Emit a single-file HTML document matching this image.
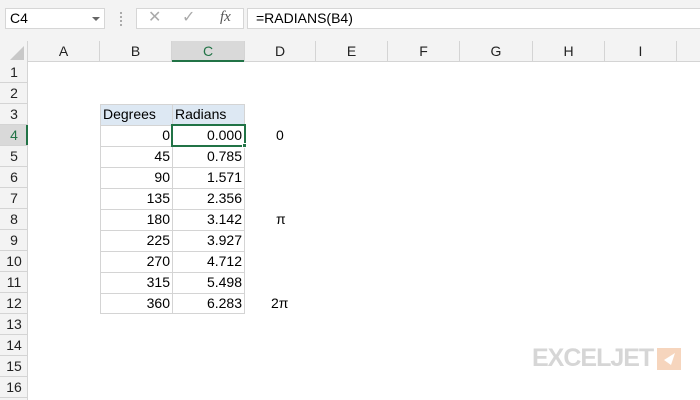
<!DOCTYPE html><html><head><style>
body{margin:0;width:700px;height:400px;overflow:hidden;background:#fff;font-family:"Liberation Sans",sans-serif;position:relative}
.a{position:absolute;box-sizing:border-box}
.t{font-size:14px;color:#000;line-height:21px;white-space:nowrap}
</style></head><body>
<div class="a" style="left:0;top:0;width:700px;height:41px;background:#f3f3f3"></div>
<div class="a" style="left:5px;top:8px;width:100px;height:21px;background:#fff;border:1px solid #d6d6d6"></div>
<div class="a t" style="left:10px;top:8px">C4</div>
<div class="a" style="left:92px;top:17px;width:0;height:0;border-left:4px solid transparent;border-right:4px solid transparent;border-top:4px solid #666"></div>
<div class="a" style="left:120px;top:12px;width:2px;height:14px;border-left:2px dotted #aaa"></div>
<div class="a" style="left:136px;top:8px;width:108px;height:21px;background:#fff;border:1px solid #d6d6d6"></div>
<div class="a t" style="left:148px;top:7px;color:#aaa;font-size:16px">✕</div>
<div class="a t" style="left:182px;top:7px;color:#aaa;font-size:16px">✓</div>
<div class="a t" style="left:220px;top:7px;color:#555;font-family:'Liberation Serif',serif;font-style:italic;font-size:15px">fx</div>
<div class="a" style="left:247px;top:8px;width:460px;height:21px;background:#fff;border:1px solid #d6d6d6"></div>
<div class="a t" style="left:256px;top:8px">=RADIANS(B4)</div>
<div class="a" style="left:0;top:41px;width:700px;height:21px;background:#f3f3f3;border-bottom:1px solid #d4d4d4"></div>
<div class="a" style="left:0;top:41px;width:28px;height:359px;background:#f3f3f3;border-right:1px solid #d4d4d4"></div>
<div class="a" style="left:10px;top:46px;width:0;height:0;border-left:14px solid transparent;border-bottom:14px solid #c8c8c8"></div>
<div class="a" style="left:172px;top:41px;width:73px;height:21px;background:#d9d9d9;border-bottom:2px solid #217346"></div>
<div class="a" style="left:0;top:125px;width:28px;height:21px;background:#d9d9d9;border-right:2px solid #217346"></div>
<div id="cols"></div>
<script>
var cx=[28,100,172,245,316,388,460,533,605,677],L="ABCDEFGHI",h="";
for(var i=0;i<9;i++){h+='<div class="a t" style="left:'+cx[i]+'px;top:41px;width:'+(cx[i+1]-cx[i])+'px;text-align:center;color:'+(i==2?'#217346':'#222')+';border-right:1px solid #d4d4d4;height:21px">'+L[i]+'</div>';}
for(var r=1;r<=16;r++){var y=62+(r-1)*21;h+='<div class="a t" style="left:0;top:'+y+'px;width:28px;text-align:center;color:'+(r==4?'#217346':'#222')+';border-bottom:1px solid #d4d4d4;height:21px">'+r+'</div>';}
var d=[[0,"0.000"],[45,"0.785"],[90,"1.571"],[135,"2.356"],[180,"3.142"],[225,"3.927"],[270,"4.712"],[315,"5.498"],[360,"6.283"]];
h+='<div class="a" style="left:100px;top:104px;width:145px;height:21px;background:#dde8f3"></div>';
h+='<div class="a t" style="left:103px;top:104px">Degrees</div><div class="a t" style="left:175px;top:104px">Radians</div>';
h+='<div class="a" style="left:100px;top:104px;width:145px;height:210px;border:1px solid #d4d4d4"></div>';
h+='<div class="a" style="left:172px;top:104px;width:1px;height:210px;background:#d4d4d4"></div>';
for(var k=0;k<9;k++){var y=125+k*21;h+='<div class="a" style="left:100px;top:'+(y)+'px;width:145px;height:1px;background:#d4d4d4"></div>';
h+='<div class="a t" style="left:100px;top:'+y+'px;width:70px;text-align:right">'+d[k][0]+'</div><div class="a t" style="left:172px;top:'+y+'px;width:70px;text-align:right">'+d[k][1]+'</div>';}
h+='<div class="a t" style="left:276px;top:125px">0</div><div class="a t" style="left:276px;top:209px">π</div><div class="a t" style="left:271px;top:293px">2π</div>';
h+='<div class="a" style="left:171px;top:124px;width:75px;height:23px;border:2px solid #217346"></div><div class="a" style="left:242px;top:143px;width:5px;height:5px;background:#217346;border:1px solid #fff"></div>';
document.getElementById("cols").innerHTML=h;
</script>
<div class="a" style="left:532px;top:344px;font:bold 25px 'Liberation Sans',sans-serif;color:#d6d6d6;letter-spacing:-1px">EXCELJET</div>
<div class="a" style="left:657px;top:348px;width:24px;height:22px;background:#f6d5bd"></div>
<svg class="a" style="left:657px;top:348px" width="24" height="22"><path d="M18 5 L7 12 L14 17 Z" fill="#fff"/></svg>
</body></html>
